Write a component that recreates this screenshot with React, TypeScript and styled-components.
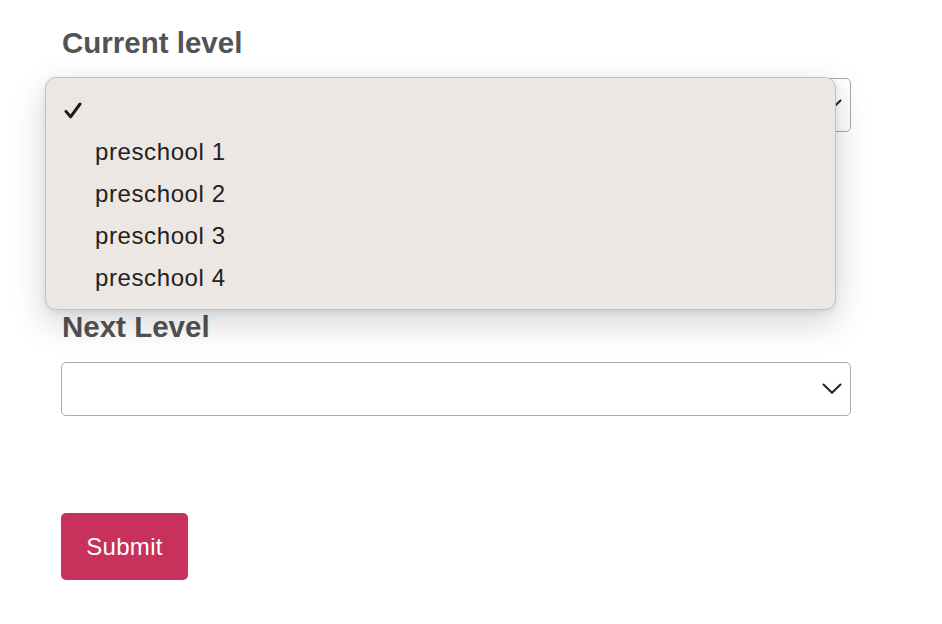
import React from 'react';
import styled, { createGlobalStyle } from 'styled-components';

const GlobalStyle = createGlobalStyle`
  body {
    margin: 0;
    background: #ffffff;
    font-family: "Liberation Sans", Arial, sans-serif;
  }
`;

const Form = styled.form`
  padding: 25px 91px 0 61px;
  display: flex;
  flex-direction: column;
`;

const Field = styled.div<{ $gap: number }>`
  display: flex;
  flex-direction: column;
  margin-bottom: ${(p) => p.$gap}px;
`;

const Label = styled.label`
  font-size: 29.5px;
  font-weight: 700;
  color: #535353;
  line-height: 36px;
  margin-bottom: 17px;
  padding-left: 1px;
`;

const SelectWrap = styled.div`
  position: relative;
`;

const SelectBox = styled.div`
  box-sizing: border-box;
  height: 54px;
  width: 790px;
  border: 1px solid #ababab;
  border-radius: 5px;
  background: #ffffff;
  display: flex;
  align-items: center;
  justify-content: flex-end;
  padding-right: 8px;
`;

const Popup = styled.ul`
  position: absolute;
  left: -16px;
  top: -1px;
  box-sizing: border-box;
  width: 791px;
  margin: 0;
  padding: 11px 0 10px;
  list-style: none;
  background: #ece7e3;
  border: 1px solid #c5c1bd;
  border-radius: 11px;
  box-shadow: 0 12px 34px rgba(0, 0, 0, 0.18), 0 2px 6px rgba(0, 0, 0, 0.08);
  z-index: 2;
`;

const Option = styled.li`
  position: relative;
  height: 42px;
  display: flex;
  align-items: center;
  padding-left: 49px;
  font-size: 24px;
  color: #222222;
  letter-spacing: 0.6px;
`;

const Check = styled.svg`
  position: absolute;
  left: 18px;
  top: 13px;
`;

const Button = styled.button`
  align-self: flex-start;
  margin-top: 1px;
  width: 127px;
  height: 67px;
  border: none;
  border-radius: 5px;
  background: #c7315b;
  color: #ffffff;
  font-family: "Liberation Sans", Arial, sans-serif;
  font-size: 24px;
  letter-spacing: 0.3px;
  padding: 0;
`;

const Chevron = () => (
  <svg width="20" height="12" viewBox="0 0 20 12" fill="none">
    <path d="M1.5 1.5 L10 9.8 L18.5 1.5" stroke="#222" strokeWidth="2" strokeLinecap="round" strokeLinejoin="round" />
  </svg>
);

const options = ['', 'preschool 1', 'preschool 2', 'preschool 3', 'preschool 4'];

export default function App() {
  return (
    <>
      <GlobalStyle />
      <Form>
        <Field $gap={177}>
          <Label>Current level</Label>
          <SelectWrap>
            <SelectBox>
              <Chevron />
            </SelectBox>
            <Popup>
              {options.map((o, i) => (
                <Option key={i}>
                  {i === 0 && (
                    <Check width="18" height="17" viewBox="0 0 18 17" fill="none">
                      <path d="M2 9.4 L6.6 14.8 L16 2" stroke="#1a1a1a" strokeWidth="3" strokeLinecap="round" strokeLinejoin="round" />
                    </Check>
                  )}
                  {o}
                </Option>
              ))}
            </Popup>
          </SelectWrap>
        </Field>
        <Field $gap={96}>
          <Label>Next Level</Label>
          <SelectWrap>
            <SelectBox>
              <Chevron />
            </SelectBox>
          </SelectWrap>
        </Field>
        <Button type="button">Submit</Button>
      </Form>
    </>
  );
}
